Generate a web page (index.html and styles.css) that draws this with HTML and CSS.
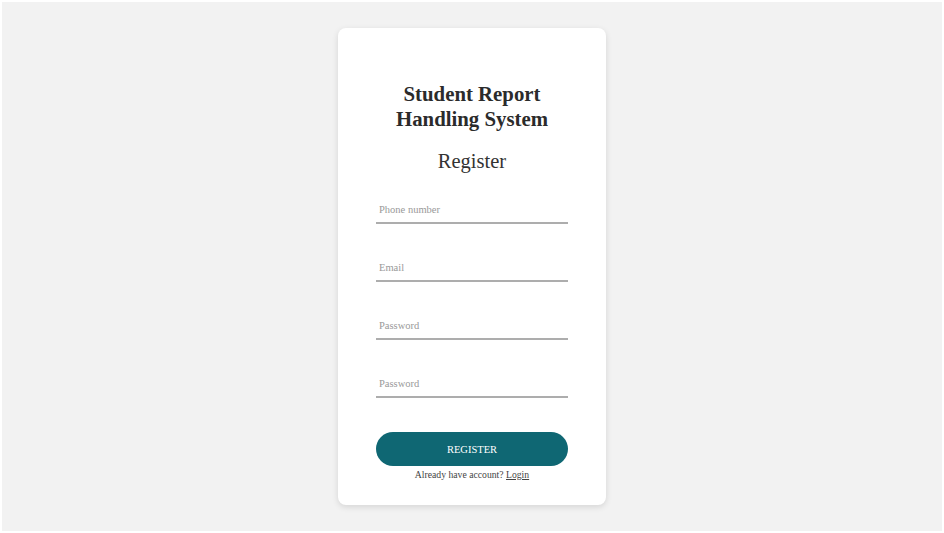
FILE: index.html
```html
<!DOCTYPE html>
<html lang="en">
<head>
    <meta charset="UTF-8">
    <meta name="viewport" content="width=device-width, initial-scale=1.0">
    <title>Register - Student Report Handling System</title>
    <link rel="stylesheet" href="styles.css">
</head>
<body>
    <div class="page">
        <div class="card">
            <h1 class="title">Student Report<br>Handling System</h1>
            <h2 class="subtitle">Register</h2>
            <form class="form" onsubmit="return false;">
                <input type="text" class="field" placeholder="Phone number">
                <input type="email" class="field" placeholder="Email">
                <input type="password" class="field" placeholder="Password">
                <input type="password" class="field" placeholder="Password">
                <button type="submit" class="btn">REGISTER</button>
                <p class="alt">Already have account? <a href="#">Login</a></p>
            </form>
        </div>
    </div>
</body>
</html>
```

FILE: styles.css
```css
html { background: #fff; }
body { margin: 0; font-family: "Liberation Serif", "Times New Roman", serif; color: #333; }
.page { margin: 2px; height: 503px; padding-top: 26px; background: #f2f2f2; }
.card { width: 192px; margin: 0 auto; padding: 53px 38px 24px; background: #fff; border-radius: 8px; box-shadow: 0 2px 6px rgba(0, 0, 0, 0.12); text-align: center; }
.title { margin: 0; font-size: 20.8px; line-height: 25px; font-weight: bold; color: #2b2b2b; }
.subtitle { margin: 18px 0 0; font-size: 20.5px; line-height: 24px; font-weight: normal; color: #333; }
.form { display: flex; flex-direction: column; margin-top: 25px; }
.field { height: 26px; box-sizing: border-box; margin: 0 0 32px; padding: 0 3px 2px; border: none; border-bottom: 2px solid #adadad; font-family: inherit; font-size: 10.5px; color: #333; outline: none; background: transparent; }
.field::placeholder { color: #999; }
.field:last-of-type { margin-bottom: 34px; }
.btn { height: 34px; border: none; border-radius: 17px; background: #0f6773; color: #fff; font-family: inherit; font-size: 10.5px; cursor: pointer; }
.alt { margin: 2px 0 0; font-size: 9.7px; line-height: 13px; color: #444; }
.alt a { color: #444; }
```
